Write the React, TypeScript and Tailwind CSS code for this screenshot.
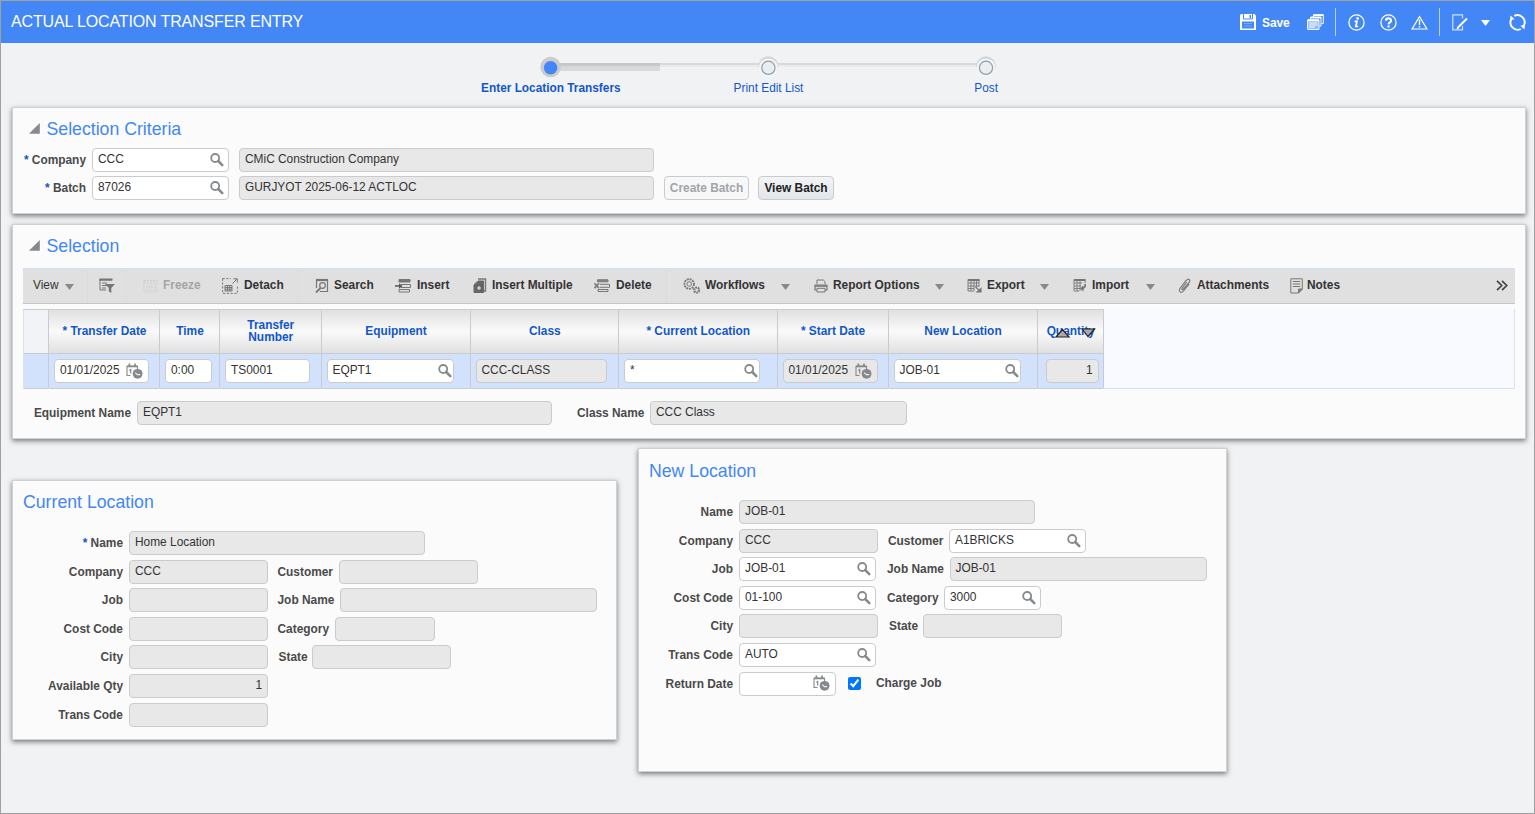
import type { ReactNode } from "react";
import { clsx } from "clsx";

function SearchIcon() {
  return (
    <svg className="h-[14px] w-[14px] shrink-0" viewBox="0 0 14 14" fill="none" stroke="#858a8f">
      <circle cx="5.2" cy="5" r="4" strokeWidth="1.8" />
      <path d="M8.2 8 L12.3 12.1" strokeWidth="2.5" strokeLinecap="round" />
    </svg>
  );
}

function DateIcon() {
  return (
    <svg className="mt-[-1px] h-[16px] w-[17px] shrink-0" viewBox="0 0 17 16" fill="none" stroke="#85898d">
      <path d="M4.5 12.5 H1 V3.2 H11.5 V6" strokeWidth="1.1" />
      <path d="M1 3.4 H11.5" strokeWidth="1.8" />
      <path d="M3.4 0.5 V3.5 M9 0.5 V3.5" strokeWidth="1.7" />
      <path d="M3.4 7.4 L4.7 6.4 V10.4" strokeWidth="1.2" />
      <circle cx="11.6" cy="10.8" r="4.9" fill="#85898d" stroke="none" />
      <path d="M9.2 9.6 L11.4 11.6 H14.2" stroke="#eee" strokeWidth="1.2" />
    </svg>
  );
}

type FieldProps = {
  className: string;
  value?: string;
  readOnly?: boolean;
  icon?: "search" | "date";
  right?: boolean;
};

function Field({ className, value, readOnly, icon, right }: FieldProps) {
  return (
    <div
      className={clsx(
        "flex h-[24px] shrink-0 items-center rounded-[4px] border border-[#cbcbcb] pl-[5px] text-[11.9px] text-[#333]",
        readOnly ? "bg-[#e8e8e8]" : "bg-white",
        !className.includes("pr-") && (icon === "date" ? "pr-[5px]" : "pr-[4px]"),
        className,
      )}
    >
      <span className={clsx("flex-1 pb-[2px] whitespace-nowrap", right && "pr-[1px] text-right")}>{value}</span>
      {icon === "search" && <SearchIcon />}
      {icon === "date" && <DateIcon />}
    </div>
  );
}

function Label({ className, required, children }: { className: string; required?: boolean; children: ReactNode }) {
  return (
    <div className={clsx("shrink-0 whitespace-nowrap pt-[1px] text-[11.9px] font-bold text-[#4a4a4a]", className)}>
      {required && <span className="text-[#1257c9]">* </span>}
      {children}
    </div>
  );
}

function Row({ children }: { children: ReactNode }) {
  return <div className="flex h-[28.6px] items-start leading-[22px]">{children}</div>;
}

function Panel({ className, children }: { className: string; children: ReactNode }) {
  return (
    <section className={clsx("border border-[#d0d1d2] bg-[#fbfbfb] shadow-[0_2px_5px_rgba(0,0,0,0.5)]", className)}>
      {children}
    </section>
  );
}

function Title({ children, collapsible }: { children: ReactNode; collapsible?: boolean }) {
  return (
    <h2 className="flex h-[22px] items-center text-[17.7px] leading-[22px] text-[#4287f5]">
      {collapsible && (
        <svg className="mt-[-1px] mr-[6.5px] ml-[6px] h-[11px] w-[11px]" viewBox="0 0 11 11">
          <path d="M10.8 0 V10.8 H0 Z" fill="#858a8f" />
        </svg>
      )}
      {children}
    </h2>
  );
}

function Header() {
  return (
    <header className="flex h-[42px] items-center bg-[#4287f5] pl-[10px] text-white">
      <h1 className="w-[1229px] text-[16px] tracking-[-0.14px] whitespace-nowrap">ACTUAL LOCATION TRANSFER ENTRY</h1>
      <svg className="h-[16px] w-[16px]" viewBox="0 0 16 16">
        <path d="M0 1.5 Q0 0 1.5 0 H14.5 L16 1.5 V16 H0 Z" fill="#fff" />
        <path d="M3.5 0 V5 H12.5 V0" fill="none" stroke="#4287f5" strokeWidth="1" />
        <path d="M9.5 1 H11 V4 H9.5 Z M2 7.6 H14 V14.4 H2 Z" fill="#4287f5" />
        <path d="M4 9.5 H12 M4 12 H12" stroke="#75a8f8" />
      </svg>
      <span className="ml-[6px] w-[45px] pt-px text-[12px] tracking-[-0.1px] font-bold">Save</span>
      <svg className="h-[16px] w-[17px]" viewBox="0 0 17 16" fill="none" stroke="#fff">
        <path d="M6.5 3 V0.7 H16.3 V9.5 H14.5 M3.5 5 V3.2 H14 V12 H12.5" />
        <path d="M6.5 1.2 H16.3 M3.5 3.6 H14" strokeWidth="1.6" />
        <path d="M0.6 6 H12 V15.4 H0.6 Z" fill="#8eb8fa" />
        <path d="M0.6 6.3 H12" strokeWidth="2" />
        <path d="M2 9 H10.5 M2 11 H10.5 M2 13 H8" />
      </svg>
      <span className="ml-[11px] h-[28px] w-px bg-[#b5d0fb]" />
      <svg className="ml-[12px] h-[17px] w-[17px]" viewBox="0 0 17 17" fill="none" stroke="#fff">
        <circle cx="8.5" cy="8.5" r="7.6" strokeWidth="1.3" />
        <circle cx="9.6" cy="4.4" r="1.3" fill="#fff" stroke="none" />
        <path d="M6.6 7.3 H9 L7.8 12.5 H10.2" strokeWidth="1.7" />
      </svg>
      <svg className="ml-[15px] h-[17px] w-[17px]" viewBox="0 0 17 17" fill="none" stroke="#fff">
        <circle cx="8.5" cy="8.5" r="7.6" strokeWidth="1.3" />
        <path d="M5.9 6.6 C6 3.6 11.2 3.7 11.1 6.6 C11 8.4 8.6 8.2 8.5 10.4 M8.5 11.5 V13.5" strokeWidth="2.1" />
      </svg>
      <svg className="ml-[14px] h-[15px] w-[17px]" viewBox="0 0 17 15" fill="none" stroke="#fff">
        <path d="M8.5 1.6 L15.9 14 H1.1 Z" strokeWidth="1.2" />
        <path d="M8.5 4.5 V10 M8.5 11 V12.6" strokeWidth="1.4" />
      </svg>
      <span className="ml-[11px] h-[28px] w-px bg-[#b5d0fb]" />
      <svg className="ml-[12px] h-[17px] w-[16px]" viewBox="0 0 16 17" fill="none" stroke="#fff">
        <path d="M10.5 4.5 V0.8 H0.8 V15.8 H10.5 V12" stroke="#cfe0fd" strokeWidth="1.2" />
        <path d="M15 4.5 L7 12.5 L5.2 14.8" strokeWidth="2" />
      </svg>
      <svg className="mt-[2px] ml-[13px] h-[6px] w-[9px]" viewBox="0 0 9 6">
        <path d="M0 0 H9 L4.5 6 Z" fill="#fff" />
      </svg>
      <svg className="ml-[19px] h-[17px] w-[17px]" viewBox="0 0 17 17" fill="none" stroke="#fff" strokeWidth="1.9">
        <path d="M5.2 1.9 A7.2 7.2 0 0 1 14.6 12 M11.8 15 A7.2 7.2 0 0 1 2.4 5" />
        <path d="M11.4 11.8 L16 10.8 L15.4 15.4 Z M5.6 5.2 L1 6.2 L1.6 1.6 Z" fill="#fff" stroke="none" />
      </svg>
    </header>
  );
}

function Train() {
  return (
    <nav className="ml-[441px] h-[64px] w-[653px] pt-[13px]">
      <svg className="h-[24px] w-[653px]" viewBox="0 0 653 24">
        <rect x="109" y="7" width="435" height="2" fill="#d8d9da" />
        <rect x="109" y="9" width="435" height="2" fill="#eaebec" />
        <rect x="109" y="7" width="109" height="8" fill="#d9d9d9" />
        <rect x="109" y="7" width="109" height="3" fill="#c8c8c8" />
        <circle cx="108.6" cy="11" r="10.3" fill="#cccccc" />
        <circle cx="108.6" cy="11.8" r="6.8" fill="#4287f5" />
        <circle cx="326.4" cy="10.3" r="10" fill="#d3d5d6" />
        <circle cx="326.4" cy="12.2" r="9.7" fill="#f3f4f5" />
        <circle cx="326.4" cy="11.8" r="6.6" fill="#ebeef0" stroke="#8f9fac" strokeWidth="1.2" />
        <circle cx="544" cy="10.3" r="10" fill="#d3d5d6" />
        <circle cx="544" cy="12.2" r="9.7" fill="#f3f4f5" />
        <circle cx="544" cy="11.8" r="6.6" fill="#ebeef0" stroke="#8f9fac" strokeWidth="1.2" />
      </svg>
      <div className="flex text-center text-[11.85px] leading-[16px] text-[#1257c9]">
        <span className="flex-1 font-bold">Enter Location Transfers</span>
        <span className="flex-1">Print Edit List</span>
        <span className="flex-1">Post</span>
      </div>
    </nav>
  );
}

const icons: Record<string, ReactNode> = {
  filter: (
    <>
      <path d="M0.5 2 H13 M1 1 V12 H7 M3 5 H8 M3 7.5 H8 M3 10 H7" />
      <path d="M0.5 1.5 H13.5" strokeWidth="2" />
      <path d="M6 6 H16 L12.3 10 V15 L9.8 13.5 V10 Z" fill="#777" stroke="none" />
    </>
  ),
  freeze: (
    <path d="M1 2.5 H14 V14 H1 Z M4 5 V13 M7 5 V13 M9 5 V13 M12 5 V13 M1 4 H14" stroke="#cfcfcf" strokeDasharray="2 1" />
  ),
  detach: (
    <>
      <path d="M0.6 0.6 H9 M0.6 0.6 V15.4 H15.4 V8" strokeDasharray="2.2 1.6" />
      <path d="M11.5 0.8 H15.3 V4.6 M15 1 L10.5 5.5" />
      <path d="M3 7.5 H10 V13 H3 Z M3 9.5 H10 M3 11.2 H10 M5.5 8 V13 M7.8 8 V13" />
    </>
  ),
  search: (
    <>
      <path d="M1.5 10 V1.5 H12.5 V13.5 H5" strokeWidth="1.2" />
      <path d="M1 2 H13" strokeWidth="2.2" />
      <circle cx="7.5" cy="7.5" r="2.8" strokeWidth="1.2" />
      <path d="M5.5 10 L1 14.5" strokeWidth="1.8" />
    </>
  ),
  insert: (
    <>
      <path d="M4 1.5 H15 V4 H4 Z" fill="#777" />
      <path d="M6 6.5 H15.5 V9.5 H6 M4 11.5 H14.5 V14 H4 Z" />
      <path d="M0 8 H5" strokeWidth="2" />
      <path d="M4 5.3 L7.5 8 L4 10.7 Z" fill="#555" stroke="none" />
    </>
  ),
  multiple: (
    <>
      <path d="M5 1 H12.5 V13 H11" strokeWidth="1.4" />
      <path d="M5 3 H10.5 V14.5 H1 V7 Z" fill="#666" stroke="#666" />
      <path d="M1.5 6 L4.5 3" stroke="#999" />
      <path d="M6 8 V12 M4 10 H8" stroke="#eee" />
    </>
  ),
  delete: (
    <>
      <path d="M3.5 1.8 H14 V3.8 H3.5 Z" fill="#888" />
      <path d="M6 6.3 H15.5 V9.3 H6 M4 11.5 H14 V13.5 H4 Z" />
      <path d="M0.5 5.3 L5 10.2 M5 5.3 L0.5 10.2" strokeWidth="1.6" />
    </>
  ),
  workflows: (
    <>
      <circle cx="6.2" cy="6" r="4.8" strokeWidth="1.8" strokeDasharray="2 0.8" />
      <circle cx="6.2" cy="6" r="2.3" />
      <circle cx="13.7" cy="12" r="2.5" strokeWidth="2.2" strokeDasharray="1.8 0.7" />
    </>
  ),
  print: (
    <>
      <path d="M3 6 V2 H9.3 L11 3.7 V6" />
      <path d="M3 12 H1 V7 H13 V12 H11" strokeWidth="1.2" />
      <path d="M1 8 H13" strokeWidth="1.6" />
      <path d="M3 10.3 H11 V14 H3 Z" fill="#e0e0e0" />
    </>
  ),
  export: (
    <>
      <path d="M1 1.5 H12 V9 M1 1.5 V13 H7 M1 5 H12 M1 8 H12 M1 10.5 H7 M4 2 V13 M7 2 V13 M9.5 2 V9" strokeWidth="0.9" />
      <path d="M1 2 H12.5" strokeWidth="2" />
      <path d="M8.5 9 L12 12 M14 10.5 V14 H10 Z" fill="#777" strokeWidth="1.2" />
    </>
  ),
  import: (
    <>
      <path d="M1 1.5 H12 V5 M1 1.5 V13 H6 M1 5 H9 M1 8 H8 M1 10.5 H7 M4 2 V13 M7 2 V13" strokeWidth="0.9" />
      <path d="M1 2 H12.5" strokeWidth="2" />
      <path d="M12 6 Q13 9 9.5 10.5" strokeWidth="1.7" />
      <path d="M10.5 7.5 V13.5 L6.8 10.5 Z" fill="#777" stroke="none" />
    </>
  ),
  attachments: (
    <path d="M8.8 4 L3.9 10.6 Q3.5 12 5 11.7 L11.4 4.2 Q12.6 1.8 10.7 1.4 Q9.3 1.1 8 2.7 L2 10.2 Q0.6 13.3 2.6 14.2 Q4 14.7 5.5 13 L11.2 6" strokeWidth="1.1" />
  ),
  notes: (
    <>
      <path d="M0.8 0.8 H12.3 V11 L8.6 15 H0.8 Z" />
      <path d="M2.8 3.5 H10.3 M2.8 6 H10.3 M2.8 8.5 H10.3" strokeWidth="1.2" />
      <path d="M8.5 15 V11 H12.3 Z" fill="#888" />
    </>
  ),
};

// slot runs up to the next item, text is only set where a caret follows
const toolbar = [
  { icon: "filter", slot: "w-[44px]", iconBox: "w-[16px]", divider: "w-[28px]" },
  { icon: "freeze", label: "Freeze", slot: "w-[79px]", iconBox: "w-[20px]", disabled: true },
  { icon: "detach", label: "Detach", slot: "w-[93px]", iconBox: "w-[22px]", divider: "w-[76px]" },
  { icon: "search", label: "Search", slot: "w-[80px]", iconBox: "w-[19px]" },
  { icon: "insert", label: "Insert", slot: "w-[78px]", iconBox: "w-[22px]" },
  { icon: "multiple", label: "Insert Multiple", slot: "w-[121px]", iconBox: "w-[19px]" },
  { icon: "delete", label: "Delete", slot: "w-[89px]", iconBox: "w-[22px]", divider: "w-[73px]" },
  { icon: "workflows", label: "Workflows", slot: "w-[131px]", iconBox: "w-[22px]", text: "w-[76px]" },
  { icon: "print", label: "Report Options", slot: "w-[153px]", iconBox: "w-[19px]", text: "w-[102px]" },
  { icon: "export", label: "Export", slot: "w-[106px]", iconBox: "w-[20px]", text: "w-[53px]" },
  { icon: "import", label: "Import", slot: "w-[105px]", iconBox: "w-[19px]", text: "w-[54px]" },
  { icon: "attachments", label: "Attachments", slot: "w-[112px]", iconBox: "w-[19px]" },
  { icon: "notes", label: "Notes", slot: "w-[206px]", iconBox: "w-[17px]" },
];

function Caret() {
  return (
    <svg className="mt-[2px] h-[6px] w-[9px] shrink-0" viewBox="0 0 9 6">
      <path d="M0 0 H9 L4.5 6 Z" fill="#858a8f" />
    </svg>
  );
}

function Toolbar() {
  return (
    <div className="flex h-[36px] items-center border-t border-b border-t-[#d0dff5] border-b-[#c6c6c6] bg-[#e0e0e0] pl-[10px] text-[11.9px] text-[#333]">
      <div className="flex w-[54px] items-center">
        <span className="w-[32px] pb-px">View</span>
        <Caret />
      </div>
      <span className="mr-[11px] h-[33px] w-px bg-[#d8dde3]" />
      {toolbar.map((item) => (
        <div key={item.icon} className={clsx("flex shrink-0", item.slot)}>
          <div className={clsx("flex h-[33px] items-center", item.divider && "border-r border-[#d8dde3]", item.divider)}>
            <div className={clsx("shrink-0", item.iconBox)}>
              <svg className="mt-[-1px] h-[16px] w-[17px]" viewBox="0 0 17 16" fill="none" stroke="#777">
                {icons[item.icon]}
              </svg>
            </div>
            <span className={clsx("pb-px font-bold whitespace-nowrap", item.text, item.disabled && "text-[#a5a5a5]")}>
              {item.label}
            </span>
            {item.text && <Caret />}
          </div>
        </div>
      ))}
      <svg className="mt-[-1px] h-[11px] w-[13px]" viewBox="0 0 13 11" fill="none" stroke="#444" strokeWidth="1.7">
        <path d="M1 0.8 L5.7 5.5 L1 10.2 M6 0.8 L10.7 5.5 L6 10.2" />
      </svg>
    </div>
  );
}

type Column = FieldProps & { head: string; width: string };

const columns: Column[] = [
  { head: "* Transfer Date", width: "w-[111px]", className: "w-[95px]", value: "01/01/2025", icon: "date" },
  { head: "Time", width: "w-[60px]", className: "w-[47px]", value: "0:00" },
  { head: "Transfer Number", width: "w-[101.5px]", className: "w-[85px]", value: "TS0001" },
  { head: "Equipment", width: "w-[149px]", className: "w-[127px] pr-[1px]", value: "EQPT1", icon: "search" },
  { head: "Class", width: "w-[148.5px]", className: "w-[131px]", value: "CCC-CLASS", readOnly: true },
  { head: "* Current Location", width: "w-[158.5px]", className: "w-[136px] pr-[1px]", value: "*", icon: "search" },
  { head: "* Start Date", width: "w-[111px]", className: "w-[95px]", value: "01/01/2025", icon: "date", readOnly: true },
  { head: "New Location", width: "w-[149px]", className: "w-[127px] pr-[1px]", value: "JOB-01", icon: "search" },
  { head: "Quantity", width: "w-[66.5px]", className: "ml-[3px] w-[53px]", value: "1", readOnly: true, right: true },
];

function Grid() {
  return (
    <div className="mt-[5px] flex h-[80px] border-r border-b border-[#d8e3ec] bg-[#f8faff]">
      <div className="w-[26px] border-t border-r border-l border-[#c9cbce] border-l-[#d8e3ec]">
        <div className="h-[43px] bg-[#f2f3f7]" />
        <div className="h-[36px] border-t border-b border-[#c9cbce] bg-[#d3e2fc]" />
      </div>
      {columns.map((column) => (
        <div key={column.head} className={clsx("shrink-0 border-t border-r border-[#c9cbce]", column.width)}>
          <div className="relative flex h-[43px] items-center justify-center bg-linear-to-b from-[#e0e0e0] via-[#fafafa] to-[#e0e0e0] pl-px text-center text-[11.9px] leading-[12px] font-bold text-[#1257c9]">
            <span className={clsx("pb-px", column.head === "Transfer Number" && "w-[60px]")}>{column.head}</span>
            {column.head === "Quantity" && (
              <svg className="absolute top-[18px] left-[17px] h-[10px] w-[41px]" viewBox="0 0 41 10" fill="#aaa" stroke="#222">
                <path d="M1 9 L7.5 1.5 L14 9 Z M27 1 L33 8.5 L39.5 1 Z" strokeWidth="1.2" />
              </svg>
            )}
          </div>
          <div className="flex h-[36px] items-center border-t border-b border-[#c9cbce] bg-[#d3e2fc] pl-[5px] leading-[19px]">
            <Field
              className={column.className}
              value={column.value}
              icon={column.icon}
              readOnly={column.readOnly}
              right={column.right}
            />
          </div>
        </div>
      ))}
    </div>
  );
}

function CurrentLocation() {
  return (
    <Panel className="mt-[32px] h-[260px] w-[605px] pt-[10px] pl-[10px]">
      <Title>Current Location</Title>
      <div className="mt-[18px]">
        <Row>
          <Label className="w-[100px] text-right" required>Name</Label>
          <Field className="ml-[6px] w-[296px]" value="Home Location" readOnly />
        </Row>
        <Row>
          <Label className="w-[100px] text-right">Company</Label>
          <Field className="ml-[6px] w-[139px]" value="CCC" readOnly />
          <Label className="ml-[9.5px] w-[61.5px]">Customer</Label>
          <Field className="w-[139px]" readOnly />
        </Row>
        <Row>
          <Label className="w-[100px] text-right">Job</Label>
          <Field className="ml-[6px] w-[139px]" readOnly />
          <Label className="ml-[9.5px] w-[62.5px]">Job Name</Label>
          <Field className="w-[257px]" readOnly />
        </Row>
        <Row>
          <Label className="w-[100px] text-right">Cost Code</Label>
          <Field className="ml-[6px] w-[139px]" readOnly />
          <Label className="ml-[9.5px] w-[57.5px]">Category</Label>
          <Field className="w-[100px]" readOnly />
        </Row>
        <Row>
          <Label className="w-[100px] text-right">City</Label>
          <Field className="ml-[6px] w-[139px]" readOnly />
          <Label className="ml-[10.5px] w-[33.5px]">State</Label>
          <Field className="w-[139px]" readOnly />
        </Row>
        <Row>
          <Label className="w-[100px] text-right">Available Qty</Label>
          <Field className="ml-[6px] w-[139px]" value="1" readOnly right />
        </Row>
        <Row>
          <Label className="w-[100px] text-right">Trans Code</Label>
          <Field className="ml-[6px] w-[139px]" readOnly />
        </Row>
      </div>
    </Panel>
  );
}

function NewLocation() {
  return (
    <Panel className="h-[324px] w-[589px] pt-[11px] pl-[10px]">
      <Title>New Location</Title>
      <div className="mt-[18px]">
        <Row>
          <Label className="w-[84px] text-right">Name</Label>
          <Field className="ml-[6px] w-[296px]" value="JOB-01" readOnly />
        </Row>
        <Row>
          <Label className="w-[84px] text-right">Company</Label>
          <Field className="ml-[6px] w-[139px]" value="CCC" readOnly />
          <Label className="ml-[10px] w-[61px]">Customer</Label>
          <Field className="w-[137px]" value="A1BRICKS" icon="search" />
        </Row>
        <Row>
          <Label className="w-[84px] text-right">Job</Label>
          <Field className="ml-[6px] w-[137px]" value="JOB-01" icon="search" />
          <Label className="ml-[11px] w-[62.5px]">Job Name</Label>
          <Field className="w-[257.5px]" value="JOB-01" readOnly />
        </Row>
        <Row>
          <Label className="w-[84px] text-right">Cost Code</Label>
          <Field className="ml-[6px] w-[137px]" value="01-100" icon="search" />
          <Label className="ml-[11px] w-[57px]">Category</Label>
          <Field className="w-[97px]" value="3000" icon="search" />
        </Row>
        <Row>
          <Label className="w-[84px] text-right">City</Label>
          <Field className="ml-[6px] w-[139px]" readOnly />
          <Label className="ml-[11px] w-[34px]">State</Label>
          <Field className="w-[139px]" readOnly />
        </Row>
        <Row>
          <Label className="w-[84px] text-right">Trans Code</Label>
          <Field className="ml-[6px] w-[137px]" value="AUTO" icon="search" />
        </Row>
        <Row>
          <Label className="w-[84px] text-right">Return Date</Label>
          <Field className="ml-[6px] w-[97px]" icon="date" />
          <input type="checkbox" defaultChecked className="mt-[5.5px] ml-[12px] h-[13px] w-[13px] accent-[#0075ff]" />
          <Label className="mt-[-0.5px] ml-[15px]">Charge Job</Label>
        </Row>
      </div>
    </Panel>
  );
}

export default function App() {
  return (
    <div className="h-[814px] w-[1535px] overflow-hidden border border-[#a0a0a0] bg-[#f1f2f4] font-['Liberation_Sans',Arial,sans-serif]">
      <Header />
      <Train />
      <main className="pl-[11px]">
        <Panel className="h-[107px] w-[1514px] pt-[10px] pl-[10px]">
          <Title collapsible>Selection Criteria</Title>
          <div className="mt-[7.6px]">
            <Row>
              <Label className="w-[63px] text-right" required>Company</Label>
              <Field className="ml-[6px] w-[137px]" value="CCC" icon="search" />
              <Field className="ml-[10px] w-[415px]" value="CMiC Construction Company" readOnly />
            </Row>
            <Row>
              <Label className="w-[63px] text-right" required>Batch</Label>
              <Field className="ml-[6px] w-[137px]" value="87026" icon="search" />
              <Field className="ml-[10px] w-[415px]" value="GURJYOT 2025-06-12 ACTLOC" readOnly />
              <button className="ml-[10px] h-[24px] w-[85px] rounded-[4px] border border-[#cbcbcb] bg-[#f7f8f9] pb-px text-[11.9px] font-bold whitespace-nowrap text-[#a3a5a7]">
                Create Batch
              </button>
              <button className="ml-[9px] h-[24px] w-[76px] rounded-[4px] border border-[#cbcbcb] bg-linear-to-b from-[#f3f4f5] to-[#e2e6ea] pb-px text-[11.9px] font-bold whitespace-nowrap text-[#222]">
                View Batch
              </button>
            </Row>
          </div>
        </Panel>

        <Panel className="mt-[10px] h-[215px] w-[1514px] pt-[10px] pr-[10px] pl-[10px]">
          <Title collapsible>Selection</Title>
          <div className="mt-[11px]">
            <Toolbar />
            <Grid />
          </div>
          <div className="mt-[12px]">
            <Row>
              <Label className="w-[108px] text-right">Equipment Name</Label>
              <Field className="ml-[6px] w-[415px]" value="EQPT1" readOnly />
              <Label className="ml-[25px] w-[73px]">Class Name</Label>
              <Field className="w-[257px]" value="CCC Class" readOnly />
            </Row>
          </div>
        </Panel>

        <div className="mt-[9px] flex items-start gap-[21px]">
          <CurrentLocation />
          <NewLocation />
        </div>
      </main>
    </div>
  );
}
